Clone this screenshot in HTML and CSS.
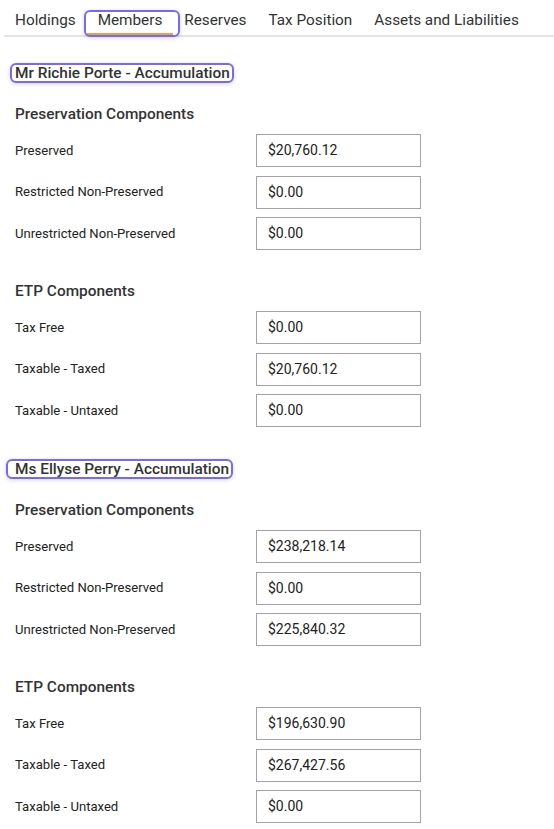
FILE: index.html
```html
<!DOCTYPE html>
<html lang="en">
<head>
<meta charset="utf-8">
<title>Members</title>
<link rel="stylesheet" href="styles.css">
</head>
<body>
<nav class="tabbar">
  <span class="tab">Holdings</span>
  <span class="tab tab-active">Members</span>
  <span class="tab">Reserves</span>
  <span class="tab">Tax Position</span>
  <span class="tab">Assets and Liabilities</span>
</nav>

<section class="member">
  <h2 class="member-name member-name-first">Mr Richie Porte - Accumulation</h2>
  <h3 class="section-title">Preservation Components</h3>
  <div class="rows">
    <label class="label">Preserved</label><div class="field">$20,760.12</div>
    <label class="label">Restricted Non-Preserved</label><div class="field">$0.00</div>
    <label class="label">Unrestricted Non-Preserved</label><div class="field">$0.00</div>
  </div>
  <h3 class="section-title section-gap">ETP Components</h3>
  <div class="rows">
    <label class="label">Tax Free</label><div class="field">$0.00</div>
    <label class="label">Taxable - Taxed</label><div class="field">$20,760.12</div>
    <label class="label">Taxable - Untaxed</label><div class="field">$0.00</div>
  </div>
</section>

<section class="member">
  <h2 class="member-name member-name-second">Ms Ellyse Perry - Accumulation</h2>
  <h3 class="section-title">Preservation Components</h3>
  <div class="rows">
    <label class="label">Preserved</label><div class="field">$238,218.14</div>
    <label class="label">Restricted Non-Preserved</label><div class="field">$0.00</div>
    <label class="label">Unrestricted Non-Preserved</label><div class="field">$225,840.32</div>
  </div>
  <h3 class="section-title section-gap">ETP Components</h3>
  <div class="rows">
    <label class="label">Tax Free</label><div class="field">$196,630.90</div>
    <label class="label">Taxable - Taxed</label><div class="field">$267,427.56</div>
    <label class="label">Taxable - Untaxed</label><div class="field">$0.00</div>
  </div>
</section>
</body>
</html>
```

FILE: styles.css
```css
* { box-sizing: border-box; }

html, body {
  margin: 0;
  padding: 0;
  background: #ffffff;
}

body {
  font-family: Roboto, "Liberation Sans", Arial, sans-serif;
  color: #222222;
}

.tabbar {
  display: flex;
  margin-left: 4px;
  height: 37px;
  border-bottom: 2px solid #e4e4e4;
}

.tab {
  position: relative;
  display: block;
  height: 35px;
  padding: 11px 11px 0 11px;
  font-size: 15.3px;
  line-height: 18px;
  color: #333333;
  white-space: nowrap;
}

.tab-active {
  box-shadow: inset 0 -2px 0 #e6a23c;
}

.tab-active::after {
  content: "";
  position: absolute;
  left: -3px;
  right: -7px;
  top: 10px;
  bottom: -2px;
  border: 2px solid #7b6ae6;
  border-radius: 6px;
  box-shadow: 0 1px 4px rgba(0, 0, 0, 0.18);
  pointer-events: none;
}

.member {
  padding-left: 15px;
  padding-top: 26px;
}

.member + .member {
  padding-top: 32px;
}

.member-name {
  position: relative;
  display: inline-block;
  margin: 0;
  font-size: 15.4px;
  font-weight: 500;
  line-height: 18px;
  color: #333333;
}

.member-name::after {
  content: "";
  position: absolute;
  top: -1px;
  bottom: -1px;
  right: -4px;
  border: 2px solid #7b6ae6;
  border-radius: 6px;
  box-shadow: 0 1px 4px rgba(0, 0, 0, 0.18);
  pointer-events: none;
}

.member-name-first::after { left: -5px; }
.member-name-second::after { left: -9px; }

.section-title {
  margin: 23px 0 0 0;
  font-size: 15.4px;
  font-weight: 500;
  line-height: 18px;
  color: #333333;
}

.section-gap {
  margin-top: 32px;
}

.rows {
  display: grid;
  grid-template-columns: 241px 165px;
  grid-auto-rows: 33px;
  row-gap: 8.5px;
  margin-top: 11px;
  align-items: center;
}

.label {
  font-size: 13.1px;
  line-height: 16px;
  color: #222222;
}

.field {
  height: 33px;
  border: 1px solid #a3a3a3;
  padding-left: 11px;
  font-size: 14px;
  line-height: 31px;
  color: #222222;
  display: flex;
  align-items: center;
}
```
